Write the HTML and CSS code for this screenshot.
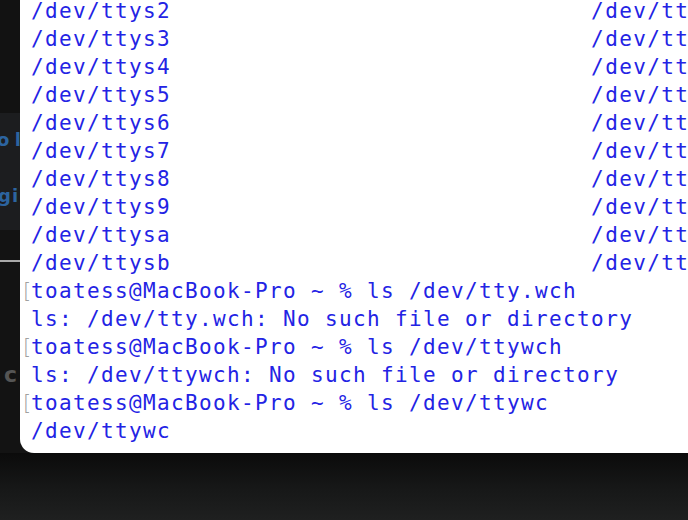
FILE: index.html
```html
<!DOCTYPE html>
<html>
<head>
<meta charset="utf-8">
<link rel="stylesheet" href="styles.css">
</head>
<body>
<div class="screen">
  <div class="top">
    <aside class="side">
      <div class="side-dark"></div>
      <div class="side-panel">
        <div class="side-text t1">o l</div>
        <div class="side-text t2">gi</div>
      </div>
      <div class="side-gap"></div>
      <div class="side-rule"></div>
      <div class="side-c">c</div>
    </aside>
    <main class="term">
<div class="line">/dev/ttys2                              /dev/ttyv2</div>
<div class="line">/dev/ttys3                              /dev/ttyv3</div>
<div class="line">/dev/ttys4                              /dev/ttyv4</div>
<div class="line">/dev/ttys5                              /dev/ttyv5</div>
<div class="line">/dev/ttys6                              /dev/ttyv6</div>
<div class="line">/dev/ttys7                              /dev/ttyv7</div>
<div class="line">/dev/ttys8                              /dev/ttyv8</div>
<div class="line">/dev/ttys9                              /dev/ttyv9</div>
<div class="line">/dev/ttysa                              /dev/ttyva</div>
<div class="line">/dev/ttysb                              /dev/ttyvb</div>
<div class="line"><span class="mark">[</span>toatess@MacBook-Pro ~ % ls /dev/tty.wch</div>
<div class="line">ls: /dev/tty.wch: No such file or directory</div>
<div class="line"><span class="mark">[</span>toatess@MacBook-Pro ~ % ls /dev/ttywch</div>
<div class="line">ls: /dev/ttywch: No such file or directory</div>
<div class="line"><span class="mark">[</span>toatess@MacBook-Pro ~ % ls /dev/ttywc</div>
<div class="line">/dev/ttywc</div>
    </main>
  </div>
  <div class="bottom"></div>
</div>
</body>
</html>
```

FILE: styles.css
```css
html, body {
  margin: 0;
  padding: 0;
  background: #141414;
  width: 688px;
  height: 520px;
  overflow: hidden;
}

.screen {
  display: flex;
  flex-direction: column;
  width: 688px;
  height: 520px;
}

.top {
  display: flex;
  height: 453px;
  background: #141414;
}

.side {
  width: 20px;
  flex: none;
  display: flex;
  flex-direction: column;
  overflow: hidden;
  background: #131313;
}

.side-dark {
  height: 113px;
  background: #121212;
}

.side-panel {
  height: 117px;
  background: #1c1d1f;
}

.side-text {
  font-family: "DejaVu Sans", sans-serif;
  font-weight: bold;
  font-size: 18px;
  color: #2c64a0;
  white-space: nowrap;
  line-height: 20px;
}

.t1 {
  margin-top: 17px;
  margin-left: -3px;
  letter-spacing: -0.5px;
}

.t2 {
  margin-top: 36px;
  margin-left: -2px;
  letter-spacing: 1px;
}

.side-gap {
  height: 30px;
}

.side-rule {
  height: 2px;
  background: #a9a9a9;
}

.side-c {
  margin-top: 102px;
  margin-left: 4px;
  font-family: "DejaVu Sans", sans-serif;
  font-weight: bold;
  font-size: 22px;
  color: #555555;
  line-height: 22px;
}

.term {
  flex: 1;
  background: #ffffff;
  border-bottom-left-radius: 14px;
  overflow: hidden;
  padding: 0 0 0 11px;
  margin-top: -3px;
}

.line {
  font-family: "DejaVu Sans Mono", monospace;
  font-size: 21px;
  letter-spacing: 1.36px;
  line-height: 28px;
  height: 28px;
  color: #2323e4;
  white-space: pre;
}

.mark {
  display: inline-block;
  width: 8px;
  margin-left: -8px;
  color: #a0a0a0;
  font-family: "DejaVu Sans", sans-serif;
  font-weight: 300;
  font-size: 21px;
  letter-spacing: 0;
}

.bottom {
  flex: 1;
  background: linear-gradient(180deg, #0b0b0b 0%, #161717 50%, #1f2020 100%);
}
```
